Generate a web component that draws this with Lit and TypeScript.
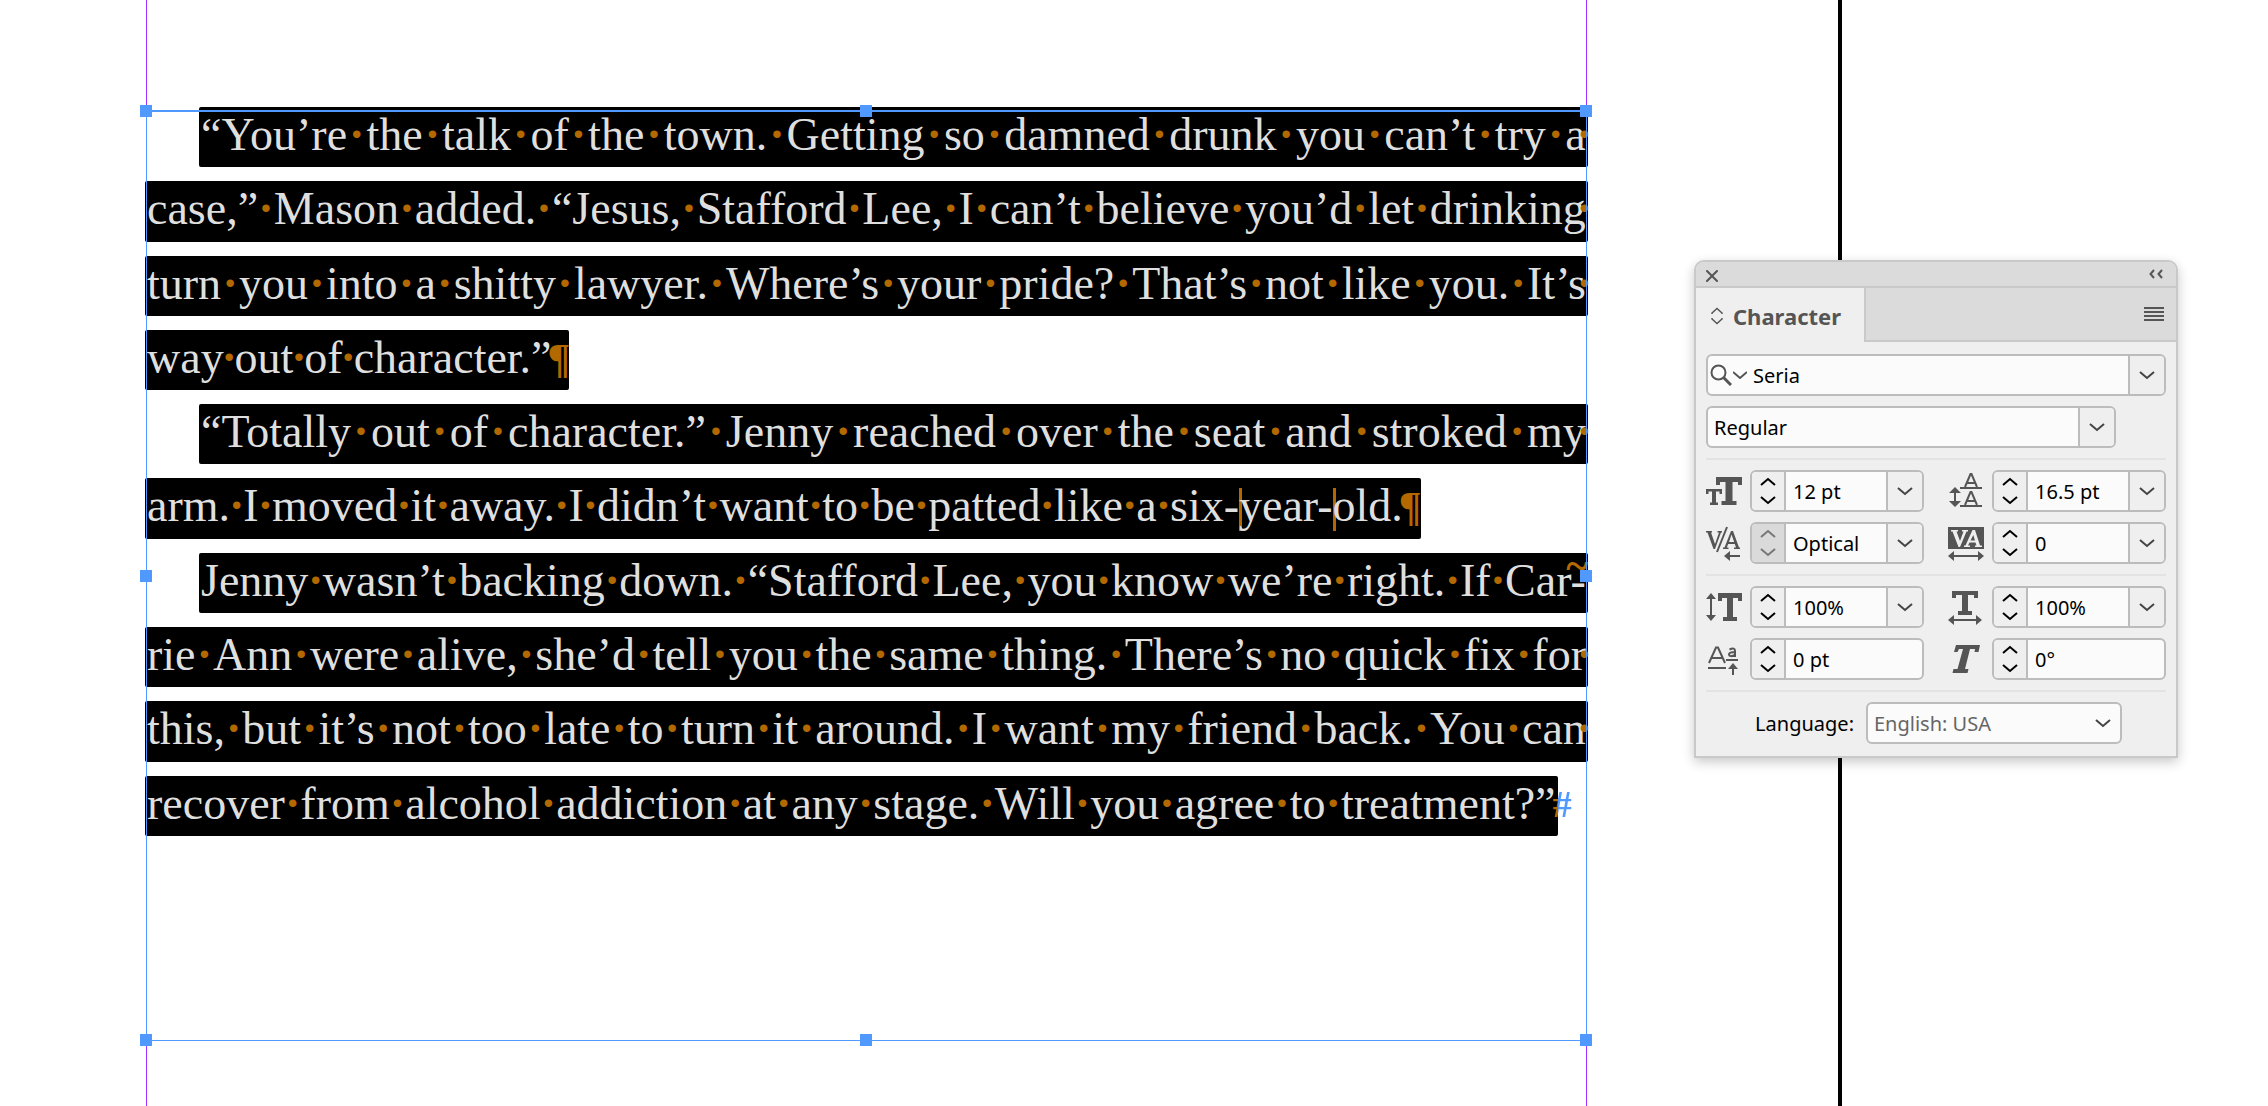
import { LitElement, html, svg, css, nothing } from "lit";
import { customElement, property } from "lit/decorators.js";

interface Line {
  text: string;
  indent?: boolean;
  width?: number;
  end: "space" | "pilcrow" | "hyphen" | "story";
}

// "|" marks a discretionary break inside a word.
const STORY: Line[] = [
  { text: "“You’re the talk of the town. Getting so damned drunk you can’t try a", indent: true, end: "space" },
  { text: "case,” Mason added. “Jesus, Stafford Lee, I can’t believe you’d let drinking", end: "space" },
  { text: "turn you into a shitty lawyer. Where’s your pride? That’s not like you. It’s", end: "space" },
  { text: "way out of character.”", width: 29.4, end: "pilcrow" },
  { text: "“Totally out of character.” Jenny reached over the seat and stroked my", indent: true, end: "space" },
  { text: "arm. I moved it away. I didn’t want to be patted like a six-|year-|old.", width: 88.4, end: "pilcrow" },
  { text: "Jenny wasn’t backing down. “Stafford Lee, you know we’re right. If Car-", indent: true, end: "hyphen" },
  { text: "rie Ann were alive, she’d tell you the same thing. There’s no quick fix for", end: "space" },
  { text: "this, but it’s not too late to turn it around. I want my friend back. You can", end: "space" },
  { text: "recover from alcohol addiction at any stage. Will you agree to treatment?”", width: 97.9, end: "story" },
];

@customElement("story-frame")
export class StoryFrame extends LitElement {
  static styles = css`
    :host {
      display: block;
      position: relative;
      margin: 0 -1px;
      height: 931px;
      font-family: "Liberation Serif", "Times New Roman", serif;
    }
    .story {
      display: grid;
      grid-template-rows: repeat(10, 1fr);
      row-gap: 14px;
      height: 729px;
      margin: 0 -1px;
      position: relative;
      top: -3px;
    }
    .line {
      position: relative;
      display: flex;
      justify-content: space-between;
      box-sizing: border-box;
      padding: 0 2px 0 2px;
      background: #000;
      color: #dfdfdf;
      border-radius: 2px;
      font-size: 46px;
      line-height: 56px;
      white-space: nowrap;
    }
    .indent {
      margin-left: 54px;
    }
    .mark {
      color: #b36800;
    }
    .space {
      width: 6px;
      display: flex;
      justify-content: center;
      font-weight: 700;
    }
    .trail {
      position: absolute;
      right: -4px;
      top: 0;
      font-weight: 700;
    }
    .pilcrow {
      margin: 0 -3px 0 -4px;
      font-size: 42px;
      font-weight: 700;
    }
    .break {
      display: inline-block;
      width: 3px;
      height: 43px;
      margin-right: -3px;
      background: #b36800;
      vertical-align: -10px;
    }
    .tilde {
      position: absolute;
      right: 0;
      top: -15px;
      font-size: 42px;
      font-weight: 700;
    }
    .hash {
      position: absolute;
      left: calc(100% - 5px);
      top: 0;
      background: linear-gradient(90deg, #b36800 5px, #4f99ff 5px);
      -webkit-background-clip: text;
      background-clip: text;
      color: transparent;
      font-size: 38px;
      font-weight: 700;
    }
    .outline {
      position: absolute;
      inset: 0;
      border: 1px solid #4f99ff;
      border-top-width: 2px;
      pointer-events: none;
    }
    .handles {
      position: absolute;
      inset: 1px 1px 1px 0;
      pointer-events: none;
    }
    .handle {
      position: absolute;
      width: 12px;
      height: 12px;
      background: #4f99ff;
      transform: translate(-50%, -50%);
    }
    .n { top: 0; }
    .m { top: 50%; }
    .s { top: 100%; }
    .w { left: 0; }
    .c { left: 50%; }
    .e { left: 100%; }
  `;

  private word(text: string) {
    return text.split("|").map((part, i) => html`${i ? html`<span class="break"></span>` : nothing}${part}`);
  }

  private ending(end: Line["end"]) {
    if (end === "space") return html`<span class="mark trail">·</span>`;
    if (end === "hyphen") return html`<span class="mark tilde">~</span>`;
    if (end === "story") return html`<span class="hash">#</span>`;
    return nothing;
  }

  private line(l: Line) {
    const words = l.text.split(" ");
    return html`<div class="line ${l.indent ? "indent" : ""}" style=${l.width ? `width:${l.width}%` : ""}>
      ${words.map((w, i) => html`${i ? html`<span class="mark space">·</span>` : nothing}<span
        >${this.word(w)}${l.end === "pilcrow" && i === words.length - 1 ? html`<span class="mark pilcrow">¶</span>` : nothing}</span>`)}
      ${this.ending(l.end)}
    </div>`;
  }

  render() {
    return html`
      <div class="story">${STORY.map((l) => this.line(l))}</div>
      <div class="outline"></div>
      <div class="handles">
        ${["n w", "n c", "n e", "m w", "m e", "s w", "s c", "s e"].map((p) => html`<span class="handle ${p}"></span>`)}
      </div>
    `;
  }
}

const down = svg`<path d="M1 1 L8 7 L15 1"/>`;
const chevronDown = html`<svg class="chev" width="16" height="9" viewBox="0 0 16 9">${down}</svg>`;
const chevronUp = html`<svg class="chev" width="16" height="9" viewBox="0 0 16 9"><path d="M1 8 L8 2 L15 8"/></svg>`;

// Slab capital T, drawn in a 24 × 28 box.
const slabT = svg`<path d="M0 0 H24 V8 H20 V5 H15 V24 H19 V28 H5 V24 H9 V5 H4 V8 H0 Z"/>`;

const ICONS: Record<string, unknown> = {
  size: svg`<g transform="translate(10 7)"><path d="M0 0 H26 V8 H22 V5 H16.500 V24 H20.500 V28 H5.500 V24 H9.500 V5 H4 V8 H0 Z"/></g>
    <path d="M0 19 H16 V24 H13.500 V21.500 H10 V32.500 H12 V35 H4 V32.500 H6 V21.500 H2.500 V24 H0 Z"/>`,
  leading: svg`<g class="stroke"><path d="M17 17 L22.500 4 H23.500 L29 17 M19 13 H27"/><path d="M17 35 L22.500 22 H23.500 L29 35 M19 31 H27"/>
    <path d="M12 18 H34 M12 36 H34"/><path d="M7 21 V33"/></g><path d="M1 23 L7 17 L13 23 Z M1 31 L7 37 L13 31 Z"/>`,
  kerning: svg`<path d="M0 9 H6 V10.500 H5 L9 22 L13 10.500 H11.500 V9 H16 V10.500 H15 L9 27 H7.500 L1.500 10.500 H0 Z"/>
    <g class="stroke"><path d="M21 5 L11 30"/></g>
    <path d="M17 27 V25.500 H18.500 L25 9 H27 L33 25.500 H34 V27 H28 V25.500 H30 L28.800 22 H22.200 L20.800 25.500 H22.500 V27 Z M23 20 H28.200 L25.500 12.500 Z" fill-rule="evenodd"/>
    <g class="stroke"><path d="M22 34 H34"/></g><path d="M18 34 L24 29 V39 Z"/>`,
  tracking: svg`<path d="M0 5 H36 V27 H0 Z"/>
    <path class="knock" d="M3 8 H10 V9.500 H8.500 L12 19 L15.500 9.500 H14 V8 H20 V9.500 H18.500 L12 25 H10.500 L4.500 9.500 H3 Z"/>
    <path class="knock" fill-rule="evenodd" d="M16 25 V23.500 H17.500 L24.500 8 H27 L32 23.500 H34 V25 H27 V23.500 H28.500 L27.500 20.500 H21.500 L20 23.500 H22 V25 Z M22.500 18.500 H27 L25.300 13 Z"/>
    <g class="stroke"><path d="M5 34 H31"/></g><path d="M0 34 L6 29 V39 Z M36 34 L30 29 V39 Z"/>`,
  vscale: svg`<g transform="translate(12 7)">${slabT}</g><g class="stroke"><path d="M5 11 V31"/></g><path d="M0 13 L5 7 L10 13 Z M0 29 L5 35 L10 29 Z"/>`,
  hscale: svg`<path d="M4 5 H30 V12 H26 V9 H20 V25 H24 V29 H10 V25 H14 V9 H8 V12 H4 Z"/><g class="stroke"><path d="M5 34 H29"/></g><path d="M0 34 L6 29 V39 Z M34 34 L28 29 V39 Z"/>`,
  baseline: svg`<g class="stroke"><path d="M3 25 L10 9.500 H12 L19 25 M6 20 H16"/><path d="M2 30 H20 M20 22 H32"/><path d="M23.500 11.500 Q29 9 29 13 V19 M29 14 Q23 14 23 16.500 Q23.500 19.500 29 17"/><path d="M27 30 V37"/></g><path d="M22 31 L27 25 L32 31 Z"/>`,
  skew: svg`<path d="M8 7 H32 L30.500 14 H26.500 L27 11 H22 L17 31 H20.500 L19.500 35 H4.500 L5.500 31 H9.500 L15 11 H11 L9.500 14 H6 Z"/>`,
};

@customElement("metric-field")
export class MetricField extends LitElement {
  @property() icon = "size";
  @property() label = "";
  @property() value = "";
  @property({ type: Boolean }) menu = false;
  @property({ type: Boolean }) locked = false;

  static styles = css`
    :host {
      display: flex;
      height: 42px;
    }
    .icon {
      width: 44px;
      flex: none;
    }
    .icon svg {
      display: block;
      fill: #555;
    }
    .stroke {
      fill: none;
      stroke: #555;
      stroke-width: 2;
    }
    .knock {
      fill: #efefef;
    }
    .box {
      flex: 1;
      min-width: 0;
      display: flex;
      border: 2px solid #bcbcbc;
      border-radius: 6px;
      background: #fbfbfb;
      overflow: hidden;
    }
    .spin {
      width: 32px;
      flex: none;
      display: grid;
      grid-template-rows: 1fr 1fr;
      border-right: 2px solid #bcbcbc;
      background: #efefef;
    }
    .spin.locked {
      background: #dadada;
    }
    button {
      border: 0;
      padding: 0;
      margin: 0;
      background: none;
      display: flex;
      align-items: center;
      justify-content: center;
    }
    .chev {
      fill: none;
      stroke: #444;
      stroke-width: 2;
    }
    .spin .chev {
      stroke: #000;
    }
    .spin.locked .chev {
      stroke: #777;
    }
    .menu {
      width: 34px;
      flex: none;
      border-left: 2px solid #bcbcbc;
      background: #efefef;
      box-sizing: content-box;
    }
    input {
      flex: 1;
      min-width: 0;
      width: 0;
      border: 0;
      outline: 0;
      padding: 1px 0 0 7px;
      background: none;
      color: #000;
      font: 20px/38px "Noto Sans", "Open Sans", sans-serif;
    }
  `;

  render() {
    return html`
      <label class="icon" for="field" aria-label=${this.label}>
        <svg width="38" height="42" viewBox="0 0 38 42" aria-hidden="true">${ICONS[this.icon]}</svg>
      </label>
      <div class="box">
        <div class="spin ${this.locked ? "locked" : ""}">
          <button type="button" aria-label="Increase" ?disabled=${this.locked}>${chevronUp}</button>
          <button type="button" aria-label="Decrease" ?disabled=${this.locked}>${chevronDown}</button>
        </div>
        <input id="field" type="text" .value=${this.value} />
        ${this.menu ? html`<button class="menu" type="button" aria-label="Presets">${chevronDown}</button>` : nothing}
      </div>
    `;
  }
}

@customElement("character-panel")
export class CharacterPanel extends LitElement {
  static styles = css`
    :host {
      display: block;
      box-sizing: border-box;
      border: 2px solid #c9c9c9;
      border-radius: 10px 10px 0 0;
      background: #efefef;
      box-shadow: 0 4px 12px rgba(0, 0, 0, 0.22);
      color: #000;
      font: 20px/38px "Noto Sans", "Open Sans", sans-serif;
    }
    button {
      border: 0;
      padding: 0;
      margin: 0;
      background: none;
      display: flex;
      align-items: center;
      justify-content: center;
    }
    svg {
      display: block;
      fill: none;
      stroke: #555;
      stroke-width: 2;
    }
    .title {
      display: flex;
      justify-content: space-between;
      align-items: center;
      height: 24px;
      padding: 0 13px 0 10px;
      background: #dbdbdb;
      border-bottom: 2px solid #c9c9c9;
      border-radius: 8px 8px 0 0;
    }
    .title button:first-child {
      padding-top: 4px;
    }
    .tabs {
      display: flex;
      height: 54px;
    }
    .tab {
      display: flex;
      align-items: center;
      gap: 10px;
      box-sizing: border-box;
      width: 168px;
      padding: 2px 0 0 15px;
      color: #555;
      font-size: 22px;
      font-weight: 700;
      line-height: 30px;
      margin: 0;
    }
    .rest {
      flex: 1;
      display: flex;
      justify-content: flex-end;
      align-items: center;
      padding-right: 12px;
      background: #dbdbdb;
      border-left: 2px solid #c9c9c9;
      border-bottom: 2px solid #c9c9c9;
    }
    .body {
      display: grid;
      gap: 10px;
      padding: 12px 10px;
    }
    .box {
      display: flex;
      align-items: center;
      box-sizing: border-box;
      height: 42px;
      border: 2px solid #bcbcbc;
      border-radius: 6px;
      background: #fbfbfb;
      overflow: hidden;
    }
    .style {
      margin-right: 50px;
    }
    .find {
      gap: 1px;
      padding-left: 2px;
    }
    .box input,
    select {
      border: 0;
      outline: 0;
      background: none;
      font: inherit;
      color: #000;
      flex: 1;
      min-width: 0;
      height: 38px;
      padding: 1px 0 0 6px;
      box-sizing: border-box;
    }
    .menu {
      flex: none;
      width: 34px;
      height: 38px;
      border-left: 2px solid #bcbcbc;
      background: #efefef;
      box-sizing: content-box;
    }
    .chev {
      stroke: #444;
    }
    hr {
      width: 100%;
      height: 2px;
      margin: 0;
      border: 0;
      background: #e3e3e3;
    }
    .pair {
      display: grid;
      grid-template-columns: 1fr 1fr;
      gap: 10px 24px;
    }
    .language {
      display: flex;
      align-items: center;
      justify-content: flex-end;
      gap: 12px;
      padding-right: 44px;
    }
    .language label {
      padding-top: 2px;
    }
    .language .box {
      width: 256px;
      padding-right: 9px;
    }
    select {
      appearance: none;
      color: #666;
    }
  `;

  render() {
    return html`
      <div class="title">
        <button type="button" aria-label="Close"><svg width="12" height="12" viewBox="0 0 12 12" stroke-linecap="round"><path d="M1 1 L11 11 M11 1 L1 11"/></svg></button>
        <button type="button" aria-label="Collapse"><svg width="14" height="10" viewBox="0 0 14 10"><path d="M5 1 L1.500 5 L5 9 M13 1 L9.500 5 L13 9"/></svg></button>
      </div>
      <div class="tabs">
        <h2 class="tab"><svg width="12" height="18" viewBox="0 0 12 18"><path d="M1 7 V6 L6 1.500 L11 6 V7 M1 11 V12 L6 16.500 L11 12 V11" stroke-width="1.500"/></svg>Character</h2>
        <div class="rest">
          <button type="button" aria-label="Panel menu"><svg width="20" height="14" viewBox="0 0 20 14"><path d="M0 1 H20 M0 5 H20 M0 9 H20 M0 13 H20"/></svg></button>
        </div>
      </div>
      <div class="body">
        <div class="box">
          <button class="find" type="button" aria-label="Search fonts">
            <svg width="22" height="22" viewBox="0 0 22 22"><circle cx="8.500" cy="8.500" r="7"/><path d="M13.500 13.500 L21 21" stroke-width="3"/></svg>
            <svg width="14" height="8" viewBox="0 0 14 8"><path d="M0 1 L7 7 L14 1"/></svg>
          </button>
          <input type="text" aria-label="Font family" .value=${"Seria"} />
          <button class="menu" type="button" aria-label="Font list">${chevronDown}</button>
        </div>
        <div class="box style">
          <input type="text" aria-label="Font style" .value=${"Regular"} />
          <button class="menu" type="button" aria-label="Style list">${chevronDown}</button>
        </div>
        <hr />
        <div class="pair">
          <metric-field icon="size" label="Font size" value="12 pt" menu></metric-field>
          <metric-field icon="leading" label="Leading" value="16.5 pt" menu></metric-field>
          <metric-field icon="kerning" label="Kerning" value="Optical" menu locked></metric-field>
          <metric-field icon="tracking" label="Tracking" value="0" menu></metric-field>
        </div>
        <hr />
        <div class="pair">
          <metric-field icon="vscale" label="Vertical scale" value="100%" menu></metric-field>
          <metric-field icon="hscale" label="Horizontal scale" value="100%" menu></metric-field>
          <metric-field icon="baseline" label="Baseline shift" value="0 pt"></metric-field>
          <metric-field icon="skew" label="Skew" value="0°"></metric-field>
        </div>
        <hr />
        <div class="language">
          <label for="language">Language:</label>
          <div class="box">
            <select id="language"><option>English: USA</option></select>
            ${chevronDown}
          </div>
        </div>
      </div>
    `;
  }
}

@customElement("app-root")
export class AppRoot extends LitElement {
  static styles = css`
    :host {
      display: grid;
      grid-template-columns: 1fr 426px;
      min-height: 100vh;
      position: relative;
      overflow: hidden;
      background: #fff;
    }
    .page {
      display: flex;
      border-right: 4px solid #000;
      padding: 0 251px 0 146px;
    }
    .column {
      flex: 1;
      min-width: 0;
      padding-top: 110px;
      border-left: 1px solid #a033ff;
      border-right: 1px solid #a033ff;
    }
    .palette {
      position: absolute;
      top: 260px;
      right: 90px;
      width: 484px;
    }
  `;

  render() {
    return html`
      <main class="page"><div class="column"><story-frame></story-frame></div></main>
      <character-panel class="palette"></character-panel>
    `;
  }
}
